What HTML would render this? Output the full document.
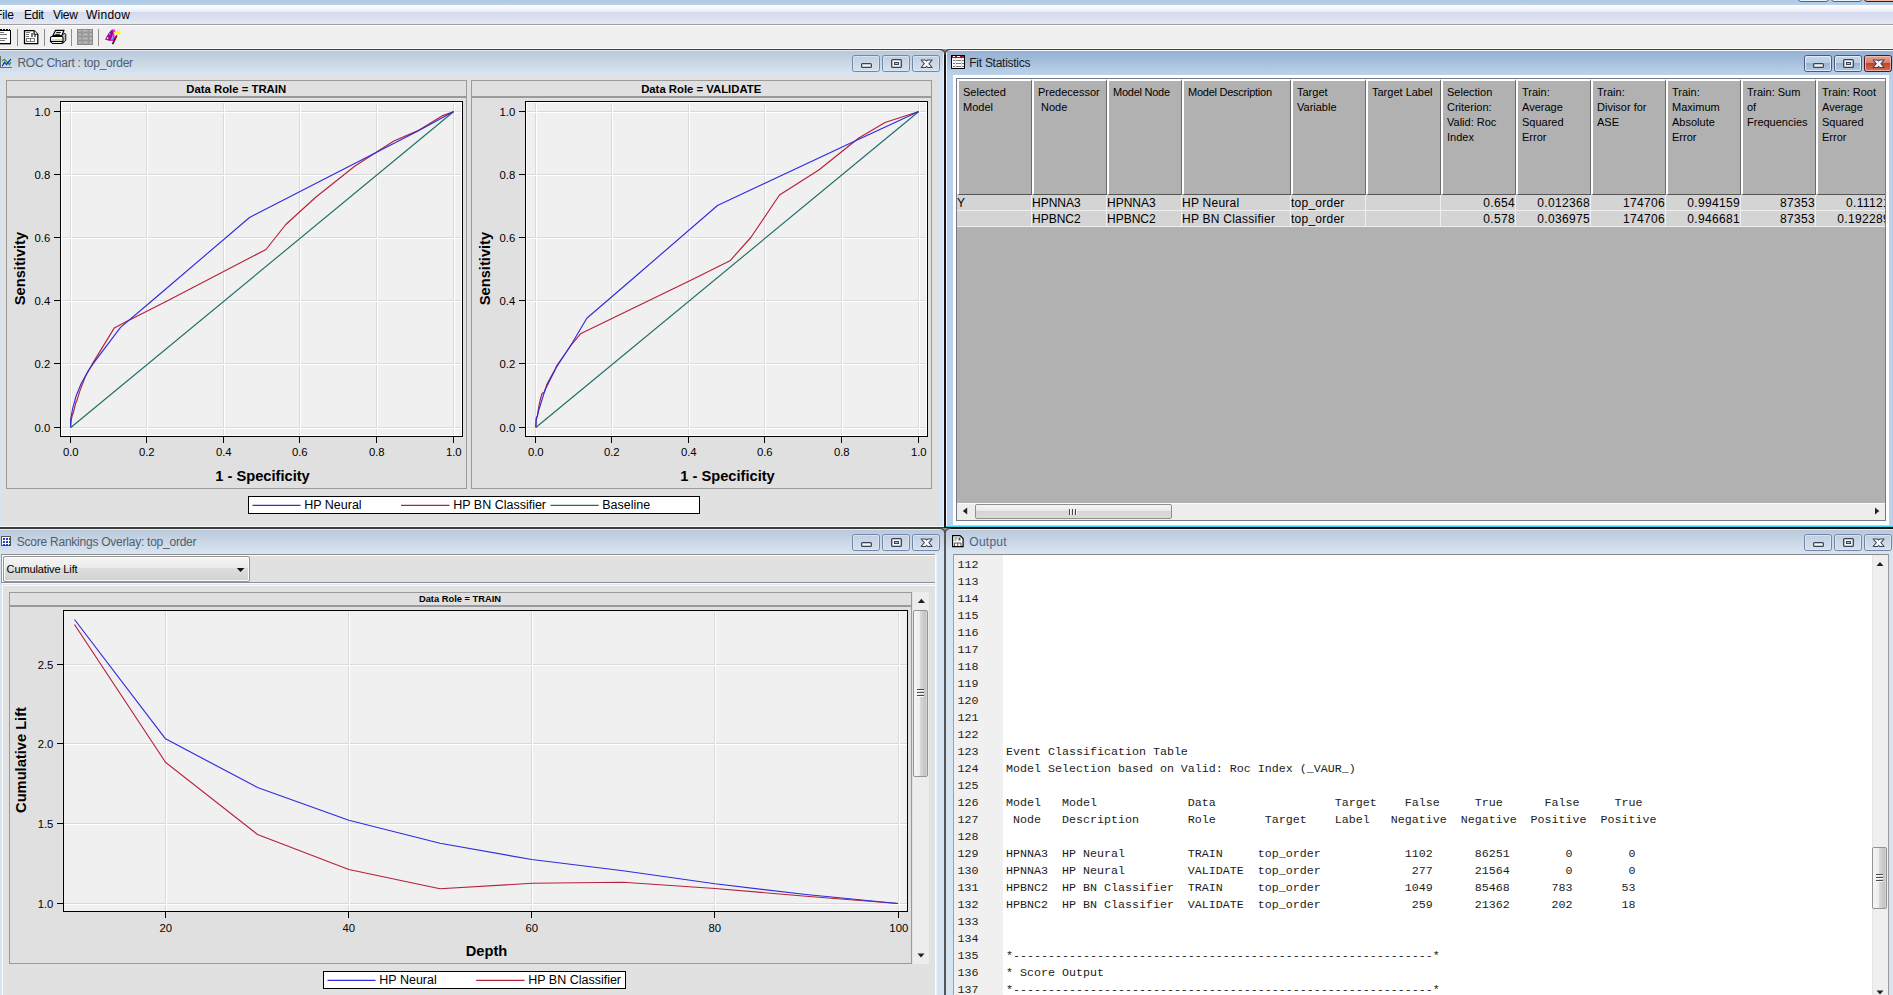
<!DOCTYPE html><html><head><meta charset="utf-8"><title>Results</title><style>
*{box-sizing:border-box;margin:0;padding:0}
html,body{width:1893px;height:995px;overflow:hidden;background:#f0f0f0}
body{position:relative;font-family:"Liberation Sans",sans-serif;font-size:12px;color:#000}
.a{position:absolute}
.t{position:absolute;white-space:pre;line-height:1}
svg{position:absolute;left:0;top:0;overflow:visible}
svg text{font-family:"Liberation Sans",sans-serif}
.mono{font-family:"Liberation Mono",monospace;font-size:11.67px;white-space:pre;position:absolute;line-height:17px;color:#1c1c1c}
.hd{position:absolute;top:79px;height:116px;background:#b1b1b1;border-left:2px solid #fff;border-top:2px solid #fff;border-right:1px solid #6a6a6a;border-bottom:1px solid #555;font-size:11px;line-height:15px;padding:4px 0 0 4px;white-space:pre;overflow:hidden;color:#000}
.cell{position:absolute;height:15px;font-size:12px;line-height:17px;white-space:pre;overflow:hidden;color:#000}
.num{text-align:right;letter-spacing:0.33px}
</style></head><body>
<div class="a" style="left:0px;top:0px;width:1893px;height:5px;background:linear-gradient(#aec9e5,#b9d1ea)"></div>
<div class="a" style="left:1798px;top:-8px;width:31px;height:10px;background:#eaf2fb;border:1px solid #56657d;border-radius:0 0 3px 3px"></div>
<div class="a" style="left:1831px;top:-8px;width:31px;height:10px;background:#eaf2fb;border:1px solid #56657d;border-radius:0 0 3px 3px"></div>
<div class="a" style="left:1864px;top:-8px;width:40px;height:10px;background:#f3b9ac;border:1px solid #4a1418;border-radius:0 0 3px 3px"></div>
<div class="a" style="left:0px;top:5px;width:1893px;height:19px;background:linear-gradient(#ffffff 0%,#eef1fa 30%,#e6eaf6 36%,#d5daee 38%,#e3e8f6 100%)"></div>
<div class="a" style="left:0px;top:24px;width:1893px;height:1px;background:#a0a0a0"></div>
<div class="a" style="left:0px;top:25px;width:1893px;height:1px;background:#ffffff"></div>
<div class="t" style="left:-5px;top:9px;font-size:12px;color:#000;font-weight:normal;letter-spacing:-0.1px;">File</div>
<div class="t" style="left:24px;top:9px;font-size:12px;color:#000;font-weight:normal;letter-spacing:-0.25px;">Edit</div>
<div class="t" style="left:53px;top:9px;font-size:12px;color:#000;font-weight:normal;letter-spacing:-0.3px;">View</div>
<div class="t" style="left:86px;top:9px;font-size:12px;color:#000;font-weight:normal;letter-spacing:0.25px;">Window</div>
<div class="a" style="left:0px;top:26px;width:1893px;height:23px;background:#f0f0f0"></div>
<div class="a" style="left:0px;top:48px;width:1893px;height:1px;background:#fbfbfb"></div>
<div class="a" style="left:0px;top:49px;width:1893px;height:1px;background:#404040"></div>
<div class="a" style="left:17px;top:29px;width:1px;height:17px;background:#8c8c8c"></div>
<div class="a" style="left:44px;top:29px;width:1px;height:17px;background:#8c8c8c"></div>
<div class="a" style="left:71px;top:29px;width:1px;height:17px;background:#8c8c8c"></div>
<div class="a" style="left:98px;top:29px;width:1px;height:17px;background:#8c8c8c"></div>
<svg width="130" height="50" viewBox="0 0 130 50">
<!-- notepad (cut off) -->
<g shape-rendering="crispEdges"><rect x="-5.5" y="30.5" width="16" height="13" fill="#fff" stroke="#000" stroke-width="1"/>
<path d="M10 31v13M-5 44h16" stroke="#000" stroke-width="1" opacity="0.35"/>
<path d="M0 29.5h2M3 29.5h2M6 29.5h2M9 29.5h1" stroke="#000" stroke-width="1"/>
<path d="M0 32.5h4M0 34.5h7M0 38.5h7M0 40.5h5" stroke="#777" stroke-width="1"/></g>
<!-- document -->
<g><path d="M24.5 30.5h9.600l3.700 3.700v9.300h-13.300z" fill="#fff" stroke="#000" stroke-width="1.25"/>
<path d="M34.100 30.500v3.700h3.700" fill="#fff" stroke="#000" stroke-width="1.100"/>
<g shape-rendering="crispEdges"><path d="M26 32.5h4M26 34.5h3M26 36.5h3" stroke="#777" stroke-width="1"/><rect x="31" y="33" width="2" height="4" fill="#777"/><rect x="34" y="35" width="2" height="2" fill="#777"/>
<rect x="26.5" y="38.5" width="8" height="3" fill="#fff" stroke="#777" stroke-width="1"/><path d="M30.5 38v4" stroke="#777" stroke-width="1"/></g></g>
<!-- printer -->
<g><path d="M53 35.6l2.6-5.3h8.3l-2 5.3z" fill="#fff" stroke="#000" stroke-width="1.2"/>
<path d="M56.2 32.4h4.6M55.3 34.3h4.6" stroke="#000" stroke-width="1"/>
<path d="M62 35.5l2.2-2.3 1.6 1v6l-3 3.3z" fill="#bbb" stroke="#000" stroke-width="0.9"/>
<path d="M50.5 38.2c0-1 .6-1.7 1.6-1.7h9.5c1 0 1.4.7 1.4 1.7v3.3h-12.5z" fill="#fff" stroke="#000" stroke-width="1.1"/>
<rect x="51.3" y="39" width="10.8" height="2" fill="#d4d4d4"/><rect x="56.8" y="39.6" width="3" height="1.2" fill="#f2ea00"/>
<path d="M50.5 41.6h12.5M52 43.5h10" stroke="#000" stroke-width="1.2"/><path d="M51 42l1.2 1.5M62.4 42l-.6 1.5" stroke="#000" stroke-width="1"/><path d="M52.5 42.5h9" stroke="#fff" stroke-width="0.9"/></g>
<!-- gray table -->
<g shape-rendering="crispEdges"><rect x="77.5" y="29.5" width="15" height="15" fill="#a6a6a6" stroke="#8a8a8a"/>
<path d="M81.5 30v14M88.5 30v14M78 32.5h14M78 36.5h14M78 40.5h14" stroke="#969696" stroke-width="1"/>
<path d="M78.5 30.5h2M83 30.5h4M90 30.5h2M78.5 34.5h2M83.5 34.5h3.500M90 34.5h2M78.5 38.5h2M83.5 38.5h3.500M90 38.5h2M78.500 42.5h2M83.500 42.5h3.500M90 42.5h2" stroke="#bdbdbd" stroke-width="1"/></g>
<!-- wizard hat -->
<g><path d="M112 29.4c-2.600 2.200-5.600 6.600-7 10.200 2 .9 4 1.400 6 1.400l2.500-8.500c-.3-1.300-.8-2.300-1.500-3.100z" fill="#a000a4"/>
<path d="M112 29.400c1.600-.2 2.900 .500 3.800 1.600l-1.800 1.800 1.400 7.600c-1.300 .5-2.800 .700-4.400 .600l2.500-8.500c-.300-1.300-.800-2.300-1.500-3.100z" fill="#ff14f0"/>
<rect x="108.900" y="33.100" width="1.400" height="2" fill="#10d840"/><rect x="106.800" y="37.100" width="1.500" height="2" fill="#ffe800"/><rect x="111.700" y="37.100" width="1.500" height="2" fill="#20e0ff"/>
<path d="M116.800 35.400l-4.200 8.800" stroke="#2a0006" stroke-width="1.600"/><path d="M116.700 35.800l-3.300 7" stroke="#c8101c" stroke-width="0.800"/>
<path d="M117.500 29v7.200M114 32.600h6.800M115 30.100l5 5M120 30.100l-5 5" stroke="#fff400" stroke-width="1"/><rect x="116.300" y="31.400" width="2.400" height="2.400" fill="#ffff00"/></g>
</svg>
<div class="a" style="left:944px;top:50px;width:2px;height:478px;background:#141414"></div>
<div class="a" style="left:944px;top:528px;width:2px;height:467px;background:#565656"></div>
<div class="a" style="left:0px;top:527px;width:944px;height:2px;background:#3c3c3c"></div>
<div class="a" style="left:946px;top:527px;width:947px;height:2px;background:#101010"></div>
<div class="a" style="left:0px;top:50px;width:944px;height:477px;background:#d6e3f1"></div>
<div class="a" style="left:0px;top:50px;width:944px;height:25px;background:linear-gradient(#e4e9f3 0px,#e4e9f3 1px,#b9c9da 1px,#c0cfdf 6px,#d0dcea 17px,#d9e5f2 25px)"></div>
<div class="a" style="left:1px;top:75px;width:936px;height:450px;background:#e1e1e1"></div>
<div class="a" style="left:0px;top:526px;width:944px;height:1px;background:#f6f8fc"></div>
<div class="a" style="left:943px;top:51px;width:1px;height:476px;background:#e9eff8"></div>
<svg width="20" height="80" viewBox="0 0 20 80"><path d="M0.5 56v11.5M0 67.5h12" fill="none" stroke="#6c6c6c" stroke-width="1" shape-rendering="crispEdges"/>
<path d="M2.5 60.5L4.5 59.3L9.5 64.6L10.8 62.3" fill="none" stroke="#10a020" stroke-width="1.25" stroke-dasharray="1 0.55" stroke-linecap="round"/>
<path d="M2.5 65.6L4.5 62.3L6.5 64.6L10.6 59.4" fill="none" stroke="#0a2cc0" stroke-width="1.25" stroke-dasharray="1 0.55" stroke-linecap="round"/></svg>
<div class="t" style="left:17.4px;top:57px;font-size:12px;color:#525d70;font-weight:normal;letter-spacing:-0.25px;">ROC Chart : top_order</div>
<svg width="1893" height="995" viewBox="0 0 1893 995"><rect x="852.5" y="55.5" width="27" height="16" rx="2" fill="none" stroke="#7286aa" stroke-width="1"/><rect x="853.5" y="56.5" width="25" height="14" rx="1.2" fill="none" stroke="#dde7f3" stroke-opacity="0.8" stroke-width="1"/><rect x="861.6" y="63.6" width="9.8" height="3.8" rx="0.9" fill="#f4f4f4" stroke="#3a4058" stroke-width="1.2"/><rect x="882.5" y="55.5" width="27" height="16" rx="2" fill="none" stroke="#7286aa" stroke-width="1"/><rect x="883.5" y="56.5" width="25" height="14" rx="1.2" fill="none" stroke="#dde7f3" stroke-opacity="0.8" stroke-width="1"/><rect x="891.7" y="59.7" width="9.6" height="7.6" rx="0.9" fill="#f6f6f6" stroke="#3a4058" stroke-width="1.3"/><rect x="894.5" y="62.5" width="4" height="2" fill="#b6c6dc" stroke="#3a4058" stroke-width="1"/><rect x="912.5" y="55.5" width="27" height="16" rx="2" fill="none" stroke="#7286aa" stroke-width="1"/><rect x="913.5" y="56.5" width="25" height="14" rx="1.2" fill="none" stroke="#dde7f3" stroke-opacity="0.8" stroke-width="1"/><clipPath id="g852_55x2o"><rect x="920.6" y="59.4" width="12" height="8.5"/></clipPath><clipPath id="g852_55x2i"><rect x="920.6" y="60.4" width="12" height="6.5"/></clipPath><path clip-path="url(#g852_55x2o)" d="M921.4 57.7L931.8000000000001 69.7M931.8000000000001 57.7L921.4 69.7" stroke="#3a4058" stroke-width="4.4" stroke-linecap="butt"/><path clip-path="url(#g852_55x2i)" d="M921.4 57.7L931.8000000000001 69.7M931.8000000000001 57.7L921.4 69.7" stroke="#f7f7f7" stroke-width="2.5" stroke-linecap="butt"/></svg>
<div class="a" style="left:6px;top:80px;width:461px;height:409px;border:1px solid #9a9a9a;background:#e0e0e0"></div>
<div class="a" style="left:7px;top:96px;width:459px;height:2px;background:#9a9a9a"></div>
<svg width="1893" height="995" viewBox="0 0 1893 995"><rect x="60.5" y="101.5" width="402" height="335" fill="#f0f0f0" stroke="#000" stroke-width="1"/><rect x="61.5" y="102.5" width="400" height="333" fill="none" stroke="#fff" stroke-width="1" shape-rendering="crispEdges"/><path d="M70.5 103V435M146.5 103V435M223.5 103V435M299.5 103V435M376.5 103V435M453.5 103V435M62 111.5H461M62 174.5H461M62 237.5H461M62 300.5H461M62 363.5H461M62 427.5H461" stroke="#d9d9d9" stroke-width="1" shape-rendering="crispEdges"/><path d="M71.5 103V435M147.5 103V435M224.5 103V435M300.5 103V435M377.5 103V435M454.5 103V435M62 112.5H461M62 175.5H461M62 238.5H461M62 301.5H461M62 364.5H461M62 428.5H461" stroke="#ffffff" stroke-width="1" shape-rendering="crispEdges"/><path d="M54 111.5H60M54 174.5H60M54 237.5H60M54 300.5H60M54 363.5H60M54 427.5H60M70.5 437V443M146.5 437V443M223.5 437V443M299.5 437V443M376.5 437V443M453.5 437V443" stroke="#000" stroke-width="1" shape-rendering="crispEdges"/><polyline points="70.8,427.5 453.8,111.5" fill="none" stroke="#1d6f67" stroke-width="1.15" stroke-linejoin="round"/><polyline points="70.6,427.4 71.3,419.6 72.6,414.0 73.2,413.5 74.1,409.7 76.0,402.0 76.6,401.5 79.7,391.4 85.3,376.7 93.1,362.6 114.2,328.1 126.1,321.8 169.0,300.0 266.0,249.5 285.8,224.5 316.0,197.0 355.0,166.0 393.8,141.0 417.5,130.9 442.8,115.6 453.8,111.5" fill="none" stroke="#b4213b" stroke-width="1.15" stroke-linejoin="round"/><polyline points="70.6,427.4 70.6,419.6 72.7,408.3 76.2,395.7 81.1,383.7 88.1,371.0 94.5,361.9 120.5,327.4 152.9,300.0 249.5,217.5 417.5,131.3 453.8,111.5" fill="none" stroke="#2f2cdc" stroke-width="1.15" stroke-linejoin="round"/><text x="50.3" y="115.6" font-size="11.33" text-anchor="end">1.0</text><text x="50.3" y="178.6" font-size="11.33" text-anchor="end">0.8</text><text x="50.3" y="241.6" font-size="11.33" text-anchor="end">0.6</text><text x="50.3" y="304.6" font-size="11.33" text-anchor="end">0.4</text><text x="50.3" y="367.6" font-size="11.33" text-anchor="end">0.2</text><text x="50.3" y="431.6" font-size="11.33" text-anchor="end">0.0</text><text x="70.8" y="456.3" font-size="11.33" text-anchor="middle">0.0</text><text x="146.8" y="456.3" font-size="11.33" text-anchor="middle">0.2</text><text x="223.8" y="456.3" font-size="11.33" text-anchor="middle">0.4</text><text x="299.8" y="456.3" font-size="11.33" text-anchor="middle">0.6</text><text x="376.8" y="456.3" font-size="11.33" text-anchor="middle">0.8</text><text x="453.8" y="456.3" font-size="11.33" text-anchor="middle">1.0</text><text x="262.5" y="481" font-size="14.67" font-weight="bold" text-anchor="middle">1 - Specificity</text><text transform="translate(25,268.5) rotate(-90)" font-size="14.67" font-weight="bold" text-anchor="middle">Sensitivity</text><text x="236.2" y="93" font-size="11.33" font-weight="bold" text-anchor="middle">Data Role = TRAIN</text></svg>
<div class="a" style="left:471px;top:80px;width:461px;height:409px;border:1px solid #9a9a9a;background:#e0e0e0"></div>
<div class="a" style="left:472px;top:96px;width:459px;height:2px;background:#9a9a9a"></div>
<svg width="1893" height="995" viewBox="0 0 1893 995"><rect x="525.5" y="101.5" width="402" height="335" fill="#f0f0f0" stroke="#000" stroke-width="1"/><rect x="526.5" y="102.5" width="400" height="333" fill="none" stroke="#fff" stroke-width="1" shape-rendering="crispEdges"/><path d="M535.5 103V435M611.5 103V435M688.5 103V435M764.5 103V435M841.5 103V435M918.5 103V435M527 111.5H926M527 174.5H926M527 237.5H926M527 300.5H926M527 363.5H926M527 427.5H926" stroke="#d9d9d9" stroke-width="1" shape-rendering="crispEdges"/><path d="M536.5 103V435M612.5 103V435M689.5 103V435M765.5 103V435M842.5 103V435M919.5 103V435M527 112.5H926M527 175.5H926M527 238.5H926M527 301.5H926M527 364.5H926M527 428.5H926" stroke="#ffffff" stroke-width="1" shape-rendering="crispEdges"/><path d="M519 111.5H525M519 174.5H525M519 237.5H525M519 300.5H525M519 363.5H525M519 427.5H525M535.5 437V443M611.5 437V443M688.5 437V443M764.5 437V443M841.5 437V443M918.5 437V443" stroke="#000" stroke-width="1" shape-rendering="crispEdges"/><polyline points="535.8,427.5 918.8,111.5" fill="none" stroke="#1d6f67" stroke-width="1.15" stroke-linejoin="round"/><polyline points="535.8,427.4 536.2,418.0 537.5,416.0 538.5,408.0 540.2,400.0 542.0,393.5 544.5,392.0 547.0,384.0 555.5,368.5 556.5,366.0 571.3,345.0 580.5,333.8 691.3,280.0 730.0,260.8 750.8,237.5 779.5,195.0 818.8,170.0 858.8,138.0 885.0,122.5 918.8,111.5" fill="none" stroke="#b4213b" stroke-width="1.15" stroke-linejoin="round"/><polyline points="535.8,427.4 536.2,420.0 538.8,410.0 545.0,390.0 556.3,367.5 572.5,342.5 586.8,318.3 631.3,280.0 717.5,205.5 855.0,141.0 918.8,111.5" fill="none" stroke="#2f2cdc" stroke-width="1.15" stroke-linejoin="round"/><text x="515.3" y="115.6" font-size="11.33" text-anchor="end">1.0</text><text x="515.3" y="178.6" font-size="11.33" text-anchor="end">0.8</text><text x="515.3" y="241.6" font-size="11.33" text-anchor="end">0.6</text><text x="515.3" y="304.6" font-size="11.33" text-anchor="end">0.4</text><text x="515.3" y="367.6" font-size="11.33" text-anchor="end">0.2</text><text x="515.3" y="431.6" font-size="11.33" text-anchor="end">0.0</text><text x="535.8" y="456.3" font-size="11.33" text-anchor="middle">0.0</text><text x="611.8" y="456.3" font-size="11.33" text-anchor="middle">0.2</text><text x="688.8" y="456.3" font-size="11.33" text-anchor="middle">0.4</text><text x="764.8" y="456.3" font-size="11.33" text-anchor="middle">0.6</text><text x="841.8" y="456.3" font-size="11.33" text-anchor="middle">0.8</text><text x="918.8" y="456.3" font-size="11.33" text-anchor="middle">1.0</text><text x="727.5" y="481" font-size="14.67" font-weight="bold" text-anchor="middle">1 - Specificity</text><text transform="translate(490,268.5) rotate(-90)" font-size="14.67" font-weight="bold" text-anchor="middle">Sensitivity</text><text x="701.2" y="93" font-size="11.33" font-weight="bold" text-anchor="middle">Data Role = VALIDATE</text></svg>
<div class="a" style="left:248px;top:496px;width:452px;height:18px;background:#fff;border:1px solid #000"></div>
<svg width="1893" height="995" viewBox="0 0 1893 995"><path d="M252.5 505.3H300.5" stroke="#2f2cdc" stroke-width="1.15"/><path d="M401 505.3H449.5" stroke="#b4213b" stroke-width="1.15"/><path d="M550.5 505.3H598.7" stroke="#1d6f67" stroke-width="1.15"/><text x="304.2" y="509.3" font-size="12.5">HP Neural</text><text x="453.2" y="509.3" font-size="12.5">HP BN Classifier</text><text x="602.2" y="509.3" font-size="12.5">Baseline</text></svg>
<div class="a" style="left:946px;top:50px;width:947px;height:477px;background:#b9d1ea"></div>
<div class="a" style="left:946px;top:50px;width:947px;height:25px;background:linear-gradient(#f8fafd 0px,#f8fafd 1px,#95b1d3 1px,#a0bad9 9px,#b2cae6 19px,#b9d1ea 25px)"></div>
<div class="a" style="left:946px;top:50px;width:1px;height:477px;background:#f4f8fc"></div>
<div class="a" style="left:946px;top:526px;width:947px;height:1px;background:#35d7f0"></div>
<div class="a" style="left:953px;top:75px;width:940px;height:450px;background:#fff"></div>
<div class="a" style="left:956px;top:78px;width:937px;height:443px;background:#747b88"></div>
<div class="a" style="left:957px;top:79px;width:928px;height:424px;background:#b1b1b1"></div>
<div class="a" style="left:1885px;top:78px;width:1px;height:443px;background:#747b88"></div>
<div class="a" style="left:1886px;top:75px;width:3px;height:450px;background:#fff"></div>
<div class="a" style="left:1889px;top:75px;width:4px;height:450px;background:#b9d1ea"></div>
<svg width="1893" height="995" viewBox="0 0 1893 995" shape-rendering="crispEdges"><rect x="951.5" y="55.5" width="13" height="13" fill="#fff" stroke="#000" stroke-width="1"/>
<rect x="952" y="56" width="12" height="2" fill="#a01818"/><path d="M953 56.5h2M957 56.5h3" stroke="#fff" stroke-width="1"/>
<path d="M953 60.5h2M956 60.5h5M962 60.5h2M953 63.5h2M956 63.5h5M962 63.5h2M953 66.5h2M956 66.5h5M962 66.5h2" stroke="#777" stroke-width="1"/><path d="M955.5 58v10M961.5 58v10" stroke="#ddd" stroke-width="1"/></svg>
<div class="t" style="left:969.3px;top:57px;font-size:12px;color:#1a1a1a;font-weight:normal;letter-spacing:-0.27px;">Fit Statistics</div>
<svg width="1893" height="995" viewBox="0 0 1893 995"><defs><linearGradient id="g1804_55c" x1="0" y1="0" x2="0" y2="1"><stop offset="0" stop-color="#e8a898"/><stop offset="0.47" stop-color="#d97e6a"/><stop offset="0.5" stop-color="#c0432a"/><stop offset="1" stop-color="#d3745c"/></linearGradient><linearGradient id="g1804_55b" x1="0" y1="0" x2="0" y2="1"><stop offset="0" stop-color="#c3d5ea"/><stop offset="0.47" stop-color="#bacee6"/><stop offset="0.5" stop-color="#9cb4d1"/><stop offset="1" stop-color="#b4cbe6"/></linearGradient></defs><rect x="1804.5" y="55.5" width="27" height="16" rx="2" fill="url(#g1804_55b)" stroke="#48587a" stroke-width="1"/><rect x="1805.5" y="56.5" width="25" height="14" rx="1.2" fill="none" stroke="#e9f1fa" stroke-opacity="0.85" stroke-width="1"/><rect x="1813.6" y="63.6" width="9.8" height="3.8" rx="0.9" fill="#f4f4f4" stroke="#3a4058" stroke-width="1.2"/><rect x="1834.5" y="55.5" width="27" height="16" rx="2" fill="url(#g1804_55b)" stroke="#48587a" stroke-width="1"/><rect x="1835.5" y="56.5" width="25" height="14" rx="1.2" fill="none" stroke="#e9f1fa" stroke-opacity="0.85" stroke-width="1"/><rect x="1843.7" y="59.7" width="9.6" height="7.6" rx="0.9" fill="#f6f6f6" stroke="#3a4058" stroke-width="1.3"/><rect x="1846.5" y="62.5" width="4" height="2" fill="#b6c6dc" stroke="#3a4058" stroke-width="1"/><rect x="1864.5" y="55.5" width="27" height="16" rx="2" fill="url(#g1804_55c)" stroke="#4c1522" stroke-width="1"/><rect x="1865.5" y="56.5" width="25" height="14" rx="1.2" fill="none" stroke="#f3c6bb" stroke-opacity="0.75" stroke-width="1"/><clipPath id="g1804_55x2o"><rect x="1872.6" y="59.4" width="12" height="8.5"/></clipPath><clipPath id="g1804_55x2i"><rect x="1872.6" y="60.4" width="12" height="6.5"/></clipPath><path clip-path="url(#g1804_55x2o)" d="M1873.3999999999999 57.7L1883.8 69.7M1883.8 57.7L1873.3999999999999 69.7" stroke="#3a4058" stroke-width="4.4" stroke-linecap="butt"/><path clip-path="url(#g1804_55x2i)" d="M1873.3999999999999 57.7L1883.8 69.7M1883.8 57.7L1873.3999999999999 69.7" stroke="#f7f7f7" stroke-width="2.5" stroke-linecap="butt"/></svg>
<div class="a" style="left:957px;top:79px;width:928px;height:424px;overflow:hidden">
<div class="hd" style="left:0px;top:0;width:75px;letter-spacing:0">Selected
Model</div>
<div class="hd" style="left:75px;top:0;width:75px;letter-spacing:0">Predecessor
 Node</div>
<div class="hd" style="left:150px;top:0;width:75px;letter-spacing:-0.25px">Model Node</div>
<div class="hd" style="left:225px;top:0;width:109px;letter-spacing:-0.25px">Model Description</div>
<div class="hd" style="left:334px;top:0;width:75px;letter-spacing:0">Target
Variable</div>
<div class="hd" style="left:409px;top:0;width:75px;letter-spacing:0">Target Label</div>
<div class="hd" style="left:484px;top:0;width:75px;letter-spacing:0">Selection
Criterion:
Valid: Roc
Index</div>
<div class="hd" style="left:559px;top:0;width:75px;letter-spacing:0">Train:
Average
Squared
Error</div>
<div class="hd" style="left:634px;top:0;width:75px;letter-spacing:0">Train:
Divisor for
ASE</div>
<div class="hd" style="left:709px;top:0;width:75px;letter-spacing:0">Train:
Maximum
Absolute
Error</div>
<div class="hd" style="left:784px;top:0;width:75px;letter-spacing:0">Train: Sum
of
Frequencies</div>
<div class="hd" style="left:859px;top:0;width:75px;letter-spacing:0">Train: Root
Average
Squared
Error</div>
<div class="a" style="left:0;top:116px;width:929px;height:16px;background:#efefef"></div>
<div class="cell" style="left:0px;top:116px;width:74px;background:#d4d4d4">Y</div>
<div class="cell" style="left:75px;top:116px;width:74px;background:#d4d4d4">HPNNA3</div>
<div class="cell" style="left:150px;top:116px;width:74px;background:#d4d4d4">HPNNA3</div>
<div class="cell" style="left:225px;top:116px;width:108px;background:#d4d4d4;letter-spacing:0.25px">HP Neural</div>
<div class="cell" style="left:334px;top:116px;width:74px;background:#d4d4d4;letter-spacing:0.25px">top_order</div>
<div class="cell" style="left:409px;top:116px;width:74px;background:#d4d4d4"></div>
<div class="cell num" style="left:484px;top:116px;width:74px;background:#d4d4d4">0.654</div>
<div class="cell num" style="left:559px;top:116px;width:74px;background:#d4d4d4">0.012368</div>
<div class="cell num" style="left:634px;top:116px;width:74px;background:#d4d4d4">174706</div>
<div class="cell num" style="left:709px;top:116px;width:74px;background:#d4d4d4">0.994159</div>
<div class="cell num" style="left:784px;top:116px;width:74px;background:#d4d4d4">87353</div>
<div class="cell num" style="left:859px;top:116px;width:74px;background:#d4d4d4">0.11121</div>
<div class="a" style="left:0;top:132px;width:929px;height:16px;background:#efefef"></div>
<div class="cell" style="left:0px;top:132px;width:74px;background:#d4d4d4"></div>
<div class="cell" style="left:75px;top:132px;width:74px;background:#d4d4d4">HPBNC2</div>
<div class="cell" style="left:150px;top:132px;width:74px;background:#d4d4d4">HPBNC2</div>
<div class="cell" style="left:225px;top:132px;width:108px;background:#d4d4d4;letter-spacing:0.25px">HP BN Classifier</div>
<div class="cell" style="left:334px;top:132px;width:74px;background:#d4d4d4;letter-spacing:0.25px">top_order</div>
<div class="cell" style="left:409px;top:132px;width:74px;background:#d4d4d4"></div>
<div class="cell num" style="left:484px;top:132px;width:74px;background:#d4d4d4">0.578</div>
<div class="cell num" style="left:559px;top:132px;width:74px;background:#d4d4d4">0.036975</div>
<div class="cell num" style="left:634px;top:132px;width:74px;background:#d4d4d4">174706</div>
<div class="cell num" style="left:709px;top:132px;width:74px;background:#d4d4d4">0.946681</div>
<div class="cell num" style="left:784px;top:132px;width:74px;background:#d4d4d4">87353</div>
<div class="cell num" style="left:859px;top:132px;width:74px;background:#d4d4d4">0.192289</div>
</div>
<div class="a" style="left:957px;top:503px;width:928px;height:17px;background:#ededed"></div>
<div class="a" style="left:957px;top:503px;width:928px;height:1px;background:#fafafa"></div>
<div class="a" style="left:975px;top:504px;width:197px;height:15px;border:1px solid #8e8e8e;border-radius:2px;background:linear-gradient(#f6f6f6 0%,#e9e9e9 45%,#d5d5d5 50%,#dcdcdc 100%)"></div>
<svg width="1893" height="995" viewBox="0 0 1893 995"><path d="M967.2 507.5v7l-4.4-3.5z" fill="#222"/><path d="M1875 507.6v7l4.3-3.5z" fill="#222"/><path d="M1069.5 509v6M1072.5 509v6M1075.5 509v6" stroke="#444" stroke-width="1" shape-rendering="crispEdges"/><path d="M1070.5 509v6M1073.5 509v6M1076.5 509v6" stroke="#fafafa" stroke-width="1" shape-rendering="crispEdges"/></svg>
<div class="a" style="left:0px;top:529px;width:944px;height:466px;background:#d6e3f1"></div>
<div class="a" style="left:0px;top:529px;width:944px;height:25px;background:linear-gradient(#e4e9f3 0px,#e4e9f3 1px,#b9c9da 1px,#c0cfdf 6px,#d0dcea 17px,#d9e5f2 25px)"></div>
<div class="a" style="left:2px;top:554px;width:933px;height:441px;background:#e1e1e1"></div>
<svg width="20" height="600" viewBox="0 0 20 600" shape-rendering="crispEdges"><rect x="1.5" y="536.5" width="9" height="9" fill="#fff" stroke="#555" stroke-width="1"/>
<path d="M3 538.5h2M6 538.5h2M9 538.5h1M3 541.5h2M6 541.5h2M9 541.5h1M3 544.5h2M6 544.5h2M9 544.5h1" stroke="#1b3fd0" stroke-width="2"/></svg>
<div class="t" style="left:16.8px;top:536px;font-size:12px;color:#525d70;font-weight:normal;letter-spacing:-0.24px;">Score Rankings Overlay: top_order</div>
<svg width="1893" height="995" viewBox="0 0 1893 995"><rect x="852.5" y="534.5" width="27" height="16" rx="2" fill="none" stroke="#7286aa" stroke-width="1"/><rect x="853.5" y="535.5" width="25" height="14" rx="1.2" fill="none" stroke="#dde7f3" stroke-opacity="0.8" stroke-width="1"/><rect x="861.6" y="542.6" width="9.8" height="3.8" rx="0.9" fill="#f4f4f4" stroke="#3a4058" stroke-width="1.2"/><rect x="882.5" y="534.5" width="27" height="16" rx="2" fill="none" stroke="#7286aa" stroke-width="1"/><rect x="883.5" y="535.5" width="25" height="14" rx="1.2" fill="none" stroke="#dde7f3" stroke-opacity="0.8" stroke-width="1"/><rect x="891.7" y="538.7" width="9.6" height="7.6" rx="0.9" fill="#f6f6f6" stroke="#3a4058" stroke-width="1.3"/><rect x="894.5" y="541.5" width="4" height="2" fill="#b6c6dc" stroke="#3a4058" stroke-width="1"/><rect x="912.5" y="534.5" width="27" height="16" rx="2" fill="none" stroke="#7286aa" stroke-width="1"/><rect x="913.5" y="535.5" width="25" height="14" rx="1.2" fill="none" stroke="#dde7f3" stroke-opacity="0.8" stroke-width="1"/><clipPath id="g852_534x2o"><rect x="920.6" y="538.4" width="12" height="8.5"/></clipPath><clipPath id="g852_534x2i"><rect x="920.6" y="539.4" width="12" height="6.5"/></clipPath><path clip-path="url(#g852_534x2o)" d="M921.4 536.7L931.8000000000001 548.7M931.8000000000001 536.7L921.4 548.7" stroke="#3a4058" stroke-width="4.4" stroke-linecap="butt"/><path clip-path="url(#g852_534x2i)" d="M921.4 536.7L931.8000000000001 548.7M931.8000000000001 536.7L921.4 548.7" stroke="#f7f7f7" stroke-width="2.5" stroke-linecap="butt"/></svg>
<div class="a" style="left:1px;top:554px;width:935px;height:29px;background:#e1e1e1;border:1px solid #8e8e8e;border-left-color:#9a9a9a"></div>
<div class="a" style="left:2px;top:555px;width:933px;height:1px;background:#fff"></div>
<div class="a" style="left:2px;top:555px;width:1px;height:27px;background:#fff"></div>
<div class="a" style="left:3px;top:556px;width:247px;height:26px;border:1px solid #959595;border-radius:2px;background:linear-gradient(#f5f5f5 0px,#ebebeb 11px,#dddddd 11px,#d2d2d2 24px);box-shadow:inset 0 0 0 1px #fbfbfb"></div>
<div class="t" style="left:6.6px;top:564px;font-size:11px;color:#000;font-weight:normal;letter-spacing:-0.12px;">Cumulative Lift</div>
<svg width="1893" height="995" viewBox="0 0 1893 995"><path d="M236.8 568h7.6l-3.8 4z" fill="#111"/></svg>
<div class="a" style="left:2px;top:583px;width:934px;height:1px;background:#fafafa"></div>
<div class="a" style="left:2px;top:584px;width:934px;height:1px;background:#dbe6f0"></div>
<div class="a" style="left:2px;top:585px;width:934px;height:1px;background:#fafafa"></div>
<div class="a" style="left:2px;top:585px;width:1px;height:410px;background:#fafafa"></div>
<div class="a" style="left:9px;top:592px;width:903px;height:372px;border:1px solid #9a9a9a;background:#e0e0e0"></div>
<div class="a" style="left:10px;top:605px;width:901px;height:2px;background:#9a9a9a"></div>
<svg width="1893" height="995" viewBox="0 0 1893 995"><rect x="63.5" y="610.5" width="844" height="301" fill="#f0f0f0" stroke="#000" stroke-width="1"/><path d="M165.5 611V911M348.5 611V911M531.5 611V911M714.5 611V911M898.5 611V911M64 664.5H907M64 743.5H907M64 823.5H907M64 903.5H907" stroke="#d9d9d9" stroke-width="1" shape-rendering="crispEdges"/><path d="M166.5 611V911M349.5 611V911M532.5 611V911M715.5 611V911M899.5 611V911M64 665.5H907M64 744.5H907M64 824.5H907M64 904.5H907" stroke="#ffffff" stroke-width="1" shape-rendering="crispEdges"/><path d="M57 664.5H63M57 743.5H63M57 823.5H63M57 903.5H63M165.5 912V918M348.5 912V918M531.5 912V918M714.5 912V918M898.5 912V918" stroke="#000" stroke-width="1" shape-rendering="crispEdges"/><polyline points="74.5,624.5 165.5,762.3 257.5,834.5 348.8,869.5 440.0,888.8 531.8,883.3 623.0,882.3 715.0,888.5 806.0,896.3 898.0,903.5" fill="none" stroke="#b4213b" stroke-width="1.15" stroke-linejoin="round"/><polyline points="74.5,619.5 165.5,738.8 257.5,787.5 348.8,820.3 440.0,843.3 531.8,859.5 623.0,870.8 715.0,883.8 806.0,894.5 898.0,903.5" fill="none" stroke="#2f2cdc" stroke-width="1.15" stroke-linejoin="round"/><text x="53.4" y="668.6" font-size="11.33" text-anchor="end">2.5</text><text x="53.4" y="747.6" font-size="11.33" text-anchor="end">2.0</text><text x="53.4" y="827.6" font-size="11.33" text-anchor="end">1.5</text><text x="53.4" y="907.6" font-size="11.33" text-anchor="end">1.0</text><text x="165.8" y="932" font-size="11.33" text-anchor="middle">20</text><text x="348.8" y="932" font-size="11.33" text-anchor="middle">40</text><text x="531.8" y="932" font-size="11.33" text-anchor="middle">60</text><text x="714.8" y="932" font-size="11.33" text-anchor="middle">80</text><text x="898.8" y="932" font-size="11.33" text-anchor="middle">100</text><text x="486.5" y="956" font-size="14.67" font-weight="bold" text-anchor="middle">Depth</text><text transform="translate(25.5,760) rotate(-90)" font-size="14.67" font-weight="bold" text-anchor="middle">Cumulative Lift</text><text x="460" y="602" font-size="9.33" font-weight="bold" text-anchor="middle">Data Role = TRAIN</text></svg>
<div class="a" style="left:913px;top:592px;width:16px;height:372px;background:#ededed"></div>
<div class="a" style="left:913px;top:610px;width:15px;height:167px;border:1px solid #949494;border-radius:2px;background:linear-gradient(90deg,#f5f5f5 0%,#eeeeee 42%,#d9d9db 48%,#c3c3c7 88%,#dcdcdc 100%)"></div>
<svg width="1893" height="995" viewBox="0 0 1893 995"><path d="M917.8 603h7.2l-3.6-4.2z" fill="#222"/><path d="M917.5 953.5h7l-3.5 4z" fill="#222"/><path d="M917 689.5h7M917 692.5h7M917 695.5h7" stroke="#4a4a4a" stroke-width="1" shape-rendering="crispEdges"/><path d="M917 690.5h7M917 693.5h7M917 696.5h7" stroke="#fafafa" stroke-width="1" shape-rendering="crispEdges"/></svg>
<div class="a" style="left:323px;top:971px;width:303px;height:18px;background:#fff;border:1px solid #000"></div>
<svg width="1893" height="995" viewBox="0 0 1893 995"><path d="M327.5 980.3H375.5" stroke="#2f2cdc" stroke-width="1.15"/><path d="M476.2 980.3H524.5" stroke="#b4213b" stroke-width="1.15"/><text x="379.3" y="984.3" font-size="12.5">HP Neural</text><text x="528.2" y="984.3" font-size="12.5">HP BN Classifier</text></svg>
<div class="a" style="left:935px;top:554px;width:1px;height:441px;background:#fbfbfb"></div>
<div class="a" style="left:936px;top:554px;width:1px;height:441px;background:#e9f0f8"></div>
<div class="a" style="left:946px;top:529px;width:947px;height:466px;background:#d6e3f1"></div>
<div class="a" style="left:946px;top:529px;width:947px;height:25px;background:linear-gradient(#e4e9f3 0px,#e4e9f3 1px,#b9c9da 1px,#c0cfdf 6px,#d0dcea 17px,#d9e5f2 25px)"></div>
<svg width="1893" height="995" viewBox="0 0 1893 995"><path d="M952.6 535.6h7.5l3 3v8h-10.5z" fill="#fff" stroke="#000" stroke-width="1.2"/>
<path d="M954.5 538h3M954.5 540h2" stroke="#666" stroke-width="1"/><rect x="958.5" y="537.5" width="2" height="3" fill="#555"/><path d="M954.5 546v-3h6.5v3M957.7 543v3" stroke="#555" stroke-width="1" fill="none"/></svg>
<div class="t" style="left:969.3px;top:536px;font-size:12px;color:#4a6286;font-weight:normal;letter-spacing:0.25px;">Output</div>
<svg width="1893" height="995" viewBox="0 0 1893 995"><rect x="1804.5" y="534.5" width="27" height="16" rx="2" fill="none" stroke="#7286aa" stroke-width="1"/><rect x="1805.5" y="535.5" width="25" height="14" rx="1.2" fill="none" stroke="#dde7f3" stroke-opacity="0.8" stroke-width="1"/><rect x="1813.6" y="542.6" width="9.8" height="3.8" rx="0.9" fill="#f4f4f4" stroke="#3a4058" stroke-width="1.2"/><rect x="1834.5" y="534.5" width="27" height="16" rx="2" fill="none" stroke="#7286aa" stroke-width="1"/><rect x="1835.5" y="535.5" width="25" height="14" rx="1.2" fill="none" stroke="#dde7f3" stroke-opacity="0.8" stroke-width="1"/><rect x="1843.7" y="538.7" width="9.6" height="7.6" rx="0.9" fill="#f6f6f6" stroke="#3a4058" stroke-width="1.3"/><rect x="1846.5" y="541.5" width="4" height="2" fill="#b6c6dc" stroke="#3a4058" stroke-width="1"/><rect x="1864.5" y="534.5" width="27" height="16" rx="2" fill="none" stroke="#7286aa" stroke-width="1"/><rect x="1865.5" y="535.5" width="25" height="14" rx="1.2" fill="none" stroke="#dde7f3" stroke-opacity="0.8" stroke-width="1"/><clipPath id="g1804_534x2o"><rect x="1872.6" y="538.4" width="12" height="8.5"/></clipPath><clipPath id="g1804_534x2i"><rect x="1872.6" y="539.4" width="12" height="6.5"/></clipPath><path clip-path="url(#g1804_534x2o)" d="M1873.3999999999999 536.7L1883.8 548.7M1883.8 536.7L1873.3999999999999 548.7" stroke="#3a4058" stroke-width="4.4" stroke-linecap="butt"/><path clip-path="url(#g1804_534x2i)" d="M1873.3999999999999 536.7L1883.8 548.7M1883.8 536.7L1873.3999999999999 548.7" stroke="#f7f7f7" stroke-width="2.5" stroke-linecap="butt"/></svg>
<div class="a" style="left:953px;top:554px;width:936px;height:441px;background:#fff;border-top:1px solid #8a8a8a;border-left:1px solid #a0a0a0"></div>
<div class="a" style="left:954px;top:555px;width:49px;height:440px;background:#f0f0f0"></div>
<div class="a" style="left:1872px;top:555px;width:17px;height:440px;background:#efefef;border-left:1px solid #e4e4e4"></div>
<div class="a" style="left:1888px;top:554px;width:1px;height:441px;background:#9a9a9a"></div>
<div class="a" style="left:1872px;top:847px;width:15px;height:62px;border:1px solid #949494;border-radius:2px;background:linear-gradient(90deg,#f5f5f5 0%,#eeeeee 42%,#d9d9db 48%,#c3c3c7 88%,#dcdcdc 100%)"></div>
<svg width="1893" height="995" viewBox="0 0 1893 995"><path d="M1876.5 566h7l-3.5-4z" fill="#222"/><path d="M1876.5 990.5h7l-3.5 4z" fill="#222"/><path d="M1876 874.5h7M1876 877.5h7M1876 880.5h7" stroke="#4a4a4a" stroke-width="1" shape-rendering="crispEdges"/><path d="M1876 875.5h7M1876 878.5h7M1876 881.5h7" stroke="#fafafa" stroke-width="1" shape-rendering="crispEdges"/></svg>
<div class="mono" style="left:957.5px;top:557px">112</div>
<div class="mono" style="left:957.5px;top:574px">113</div>
<div class="mono" style="left:957.5px;top:591px">114</div>
<div class="mono" style="left:957.5px;top:608px">115</div>
<div class="mono" style="left:957.5px;top:625px">116</div>
<div class="mono" style="left:957.5px;top:642px">117</div>
<div class="mono" style="left:957.5px;top:659px">118</div>
<div class="mono" style="left:957.5px;top:676px">119</div>
<div class="mono" style="left:957.5px;top:693px">120</div>
<div class="mono" style="left:957.5px;top:710px">121</div>
<div class="mono" style="left:957.5px;top:727px">122</div>
<div class="mono" style="left:957.5px;top:744px">123</div>
<div class="mono" style="left:1006px;top:744px">Event Classification Table</div>
<div class="mono" style="left:957.5px;top:761px">124</div>
<div class="mono" style="left:1006px;top:761px">Model Selection based on Valid: Roc Index (_VAUR_)</div>
<div class="mono" style="left:957.5px;top:778px">125</div>
<div class="mono" style="left:957.5px;top:795px">126</div>
<div class="mono" style="left:1006px;top:795px">Model   Model             Data                 Target    False     True      False     True</div>
<div class="mono" style="left:957.5px;top:812px">127</div>
<div class="mono" style="left:1006px;top:812px"> Node   Description       Role       Target    Label   Negative  Negative  Positive  Positive</div>
<div class="mono" style="left:957.5px;top:829px">128</div>
<div class="mono" style="left:957.5px;top:846px">129</div>
<div class="mono" style="left:1006px;top:846px">HPNNA3  HP Neural         TRAIN     top_order            1102      86251        0        0</div>
<div class="mono" style="left:957.5px;top:863px">130</div>
<div class="mono" style="left:1006px;top:863px">HPNNA3  HP Neural         VALIDATE  top_order             277      21564        0        0</div>
<div class="mono" style="left:957.5px;top:880px">131</div>
<div class="mono" style="left:1006px;top:880px">HPBNC2  HP BN Classifier  TRAIN     top_order            1049      85468      783       53</div>
<div class="mono" style="left:957.5px;top:897px">132</div>
<div class="mono" style="left:1006px;top:897px">HPBNC2  HP BN Classifier  VALIDATE  top_order             259      21362      202       18</div>
<div class="mono" style="left:957.5px;top:914px">133</div>
<div class="mono" style="left:957.5px;top:931px">134</div>
<div class="mono" style="left:957.5px;top:948px">135</div>
<div class="mono" style="left:1006px;top:948px">*------------------------------------------------------------*</div>
<div class="mono" style="left:957.5px;top:965px">136</div>
<div class="mono" style="left:1006px;top:965px">* Score Output</div>
<div class="mono" style="left:957.5px;top:982px">137</div>
<div class="mono" style="left:1006px;top:982px">*------------------------------------------------------------*</div>
<svg width="1893" height="995" viewBox="0 0 1893 995"><path d="M939.5 49h11v1.2c-2.6 .2-4.300 1.500-4.600 4h-1.800c-.300-2.500-2-3.800-4.600-4z" fill="#8a8a8a"/><path d="M939 49.5h1.500c2.700 .200 4.300 1.800 4.500 4.500M951 49.500h-1.500c-2.700 .200-4.300 1.800-4.500 4.500" fill="none" stroke="#333" stroke-width="1"/><path d="M939.5 528h11v1.200c-2.600 .200-4.300 1.500-4.600 4h-1.800c-.300-2.500-2-3.800-4.600-4z" fill="#8a8a8a"/><path d="M939 528.500h1.500c2.700 .200 4.300 1.800 4.500 4.500M951 528.500h-1.500c-2.700 .200-4.300 1.800-4.500 4.500" fill="none" stroke="#3a3a3a" stroke-width="1"/></svg>
</body></html>
